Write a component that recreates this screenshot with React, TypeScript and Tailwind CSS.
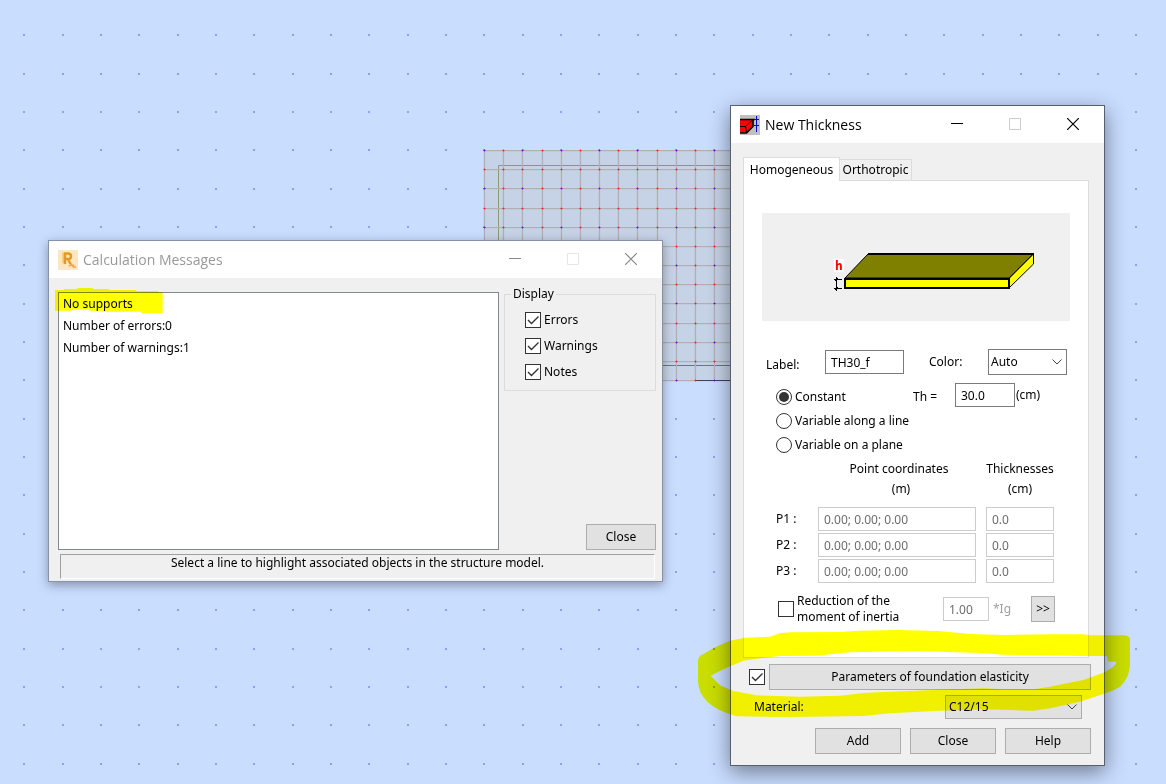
import { useId, useState } from 'react';
import type { ReactNode } from 'react';
import { clsx } from 'clsx';

const STEP = 115 / 3;
const MESH = { x: 484, y: 150, cols: 24, rows: 12 };

const points = ['P1', 'P2', 'P3'];
const thicknessTypes = ['Constant', 'Variable along a line', 'Variable on a plane'];

const buttonStyle = 'h-[26px] border border-[#adadad] bg-[#e1e1e1] text-center hover:bg-[#e5f1fb]';
const inputStyle =
  'h-6 min-w-0 border border-[#7a7a7a] bg-white px-[5px] text-black disabled:border-[#cccccc] disabled:text-[#6d6d6d]';

function ModelView() {
  const half = STEP / 2;
  const width = MESH.cols * half;
  const height = MESH.rows * half;

  return (
    <svg className="absolute inset-0 h-full w-full" aria-hidden="true">
      {/* Background grid */}
      {Array.from({ length: 24 }).map((_, row) =>
        Array.from({ length: 54 }).map((_, col) => (
          <rect
            key={`${row}-${col}`}
            x={Math.round(23.2 + col * STEP)}
            y={Math.round(34.2 + row * STEP)}
            width="2"
            height="2"
            fill="#8088fb"
            opacity="0.75"
          />
        ))
      )}

      {/* Meshed slab */}
      <rect x={MESH.x} y={MESH.y} width={width} height={height} fill="#c6d2e6" />
      <path d="M498.5 365.5V165.5H930V365.5Z" fill="none" stroke="#93986c" />
      <path d="M498 365.5H930" stroke="#7f8010" />
      {Array.from({ length: MESH.cols + 1 }).map((_, i) => (
        <rect key={i} x={Math.round(MESH.x + i * half) - 0.2} y={MESH.y} width="1.3" height={height} fill="#b0b0b4" />
      ))}
      {Array.from({ length: MESH.rows + 1 }).map((_, i) => (
        <rect key={i} x={MESH.x} y={Math.round(MESH.y + i * half)} width={width} height="1.2" fill="#b0b0b4" />
      ))}
      <path d="M695 380.5H930" stroke="#3d4560" />
      {Array.from({ length: MESH.rows + 1 }).map((_, row) =>
        Array.from({ length: MESH.cols + 1 }).map((_, col) => {
          const x = Math.round(MESH.x + col * half);
          const y = Math.round(MESH.y + row * half);
          const color = row % 2 === 0 && col % 2 === 0 ? '#8000e0' : '#ff1a1a';
          return (
            <g key={`${row}-${col}`} fill={color}>
              <rect x={x - 1} y={y} width="3" height="1" opacity="0.5" />
              <rect x={x} y={y - 1} width="1" height="3" opacity="0.4" />
              <rect x={x} y={y} width="1" height="1" />
            </g>
          );
        })
      )}
    </svg>
  );
}

function RobotIcon() {
  return (
    <svg width="20" height="20" viewBox="0 0 20 20" aria-hidden="true">
      <rect width="20" height="20" fill="#fde6c4" />
      <path d="M4 2l3 1.500v11l-3-2z" fill="#f8cd85" />
      <path
        d="M7 14V3.500h3.200q2.800 0 2.800 2.700T10.200 9H7M10 9l2.500 5"
        fill="none"
        stroke="#e39a22"
        strokeWidth="2.400"
      />
      <path d="M11 16.500l2.500-2.500 2 3.500M15.500 14.500v2.500h2.500" fill="none" stroke="#eba93b" strokeWidth="1.300" />
    </svg>
  );
}

function ThicknessIcon() {
  return (
    <svg width="20" height="20" viewBox="0 0 20 20" aria-hidden="true">
      <rect width="20" height="20" fill="#c0c0c0" />
      <path d="M0 5h13.500v4l-1.500 3-5 5.500H0z" fill="#ff0000" />
      <path d="M0 4.500h15M0 18h6.500l6.500-6.500V5" fill="none" stroke="#000000" strokeWidth="1.600" />
      <path d="M0 11.500h5.500L12.500 5M5.500 11.500l1 6" fill="none" stroke="#000000" />
      <path d="M16.500 1v16M14 4.500h5M14 10.500h5" fill="none" stroke="#0000e0" />
    </svg>
  );
}

function TitleBar({ icon, title, active }: { icon: ReactNode; title: string; active?: boolean }) {
  const stroke = active ? '#000000' : '#8a8a8a';
  const control = 'flex w-[58px] items-center justify-center pb-px';

  return (
    <div className="flex h-[37px] items-stretch bg-white pr-0.5">
      <div
        className={clsx(
          "flex flex-1 items-center gap-[5px] pl-[9px] font-['Open_Sans',sans-serif] text-[14px] whitespace-nowrap",
          active ? 'text-black' : 'text-[#999999]'
        )}
      >
        {icon}
        <h2>{title}</h2>
      </div>
      <button type="button" aria-label="Minimize" className={control}>
        <svg width="12" height="12" viewBox="0 0 12 12">
          <path d="M0 5.500h12" stroke={stroke} />
        </svg>
      </button>
      <button type="button" aria-label="Maximize" disabled className={control}>
        <svg width="12" height="12" viewBox="0 0 12 12">
          <path d="M.5.500h11v11H.5z" fill="none" stroke={active ? '#cccccc' : '#e6e6e6'} />
        </svg>
      </button>
      <button type="button" aria-label="Close window" className={control}>
        <svg width="12" height="12" viewBox="0 0 12 12">
          <path d="M0 0l12 12M12 0L0 12" stroke={stroke} strokeWidth="1.200" />
        </svg>
      </button>
    </div>
  );
}

interface CheckboxProps {
  label?: ReactNode;
  ariaLabel?: string;
  defaultChecked?: boolean;
}

function Checkbox({ label, ariaLabel, defaultChecked }: CheckboxProps) {
  const id = useId();

  return (
    <div className="flex items-center gap-[3px]">
      <span className="relative h-4 w-4 shrink-0">
        <input
          id={id}
          type="checkbox"
          aria-label={ariaLabel}
          defaultChecked={defaultChecked}
          className="peer block h-4 w-4 appearance-none border border-[#333333] bg-white"
        />
        <svg
          viewBox="0 0 16 16"
          className="pointer-events-none absolute inset-0 hidden h-4 w-4 peer-checked:block"
        >
          <path d="M3 8l3.500 3.500L13.500 4.500" fill="none" stroke="#333333" strokeWidth="1.400" />
        </svg>
      </span>
      {label && (
        <label htmlFor={id} className="leading-4">
          {label}
        </label>
      )}
    </div>
  );
}

function SelectBox({ id, value, className }: { id: string; value: string; className: string }) {
  return (
    <div className="relative">
      <select id={id} defaultValue={value} className={clsx('block appearance-none border', className)}>
        <option>{value}</option>
      </select>
      <svg
        width="10"
        height="6"
        viewBox="0 0 10 6"
        className="pointer-events-none absolute top-1/2 right-[5px] -translate-y-1/2"
      >
        <path d="M.5.500L5 5 9.500.500" fill="none" stroke="#444444" />
      </svg>
    </div>
  );
}

function SlabDrawing() {
  return (
    <div className="flex h-[108px] justify-center bg-[#f0f0f0]">
      <svg width="308" height="108" viewBox="0 0 308 108" role="img" aria-label="Slab of thickness h">
        <path d="M83 65L106 41h165L247 65z" fill="#808000" stroke="#000000" />
        <path d="M247 65.500L271.500 41v10L247 75z" fill="#ffff00" stroke="#000000" />
        <path d="M106 41h166" stroke="#000000" strokeWidth="2" />
        <rect x="83" y="66" width="164" height="9" fill="#ffff00" stroke="#000000" strokeWidth="2" />
        <rect x="72" y="46" width="10" height="13" fill="#ffffff" />
        <text x="73" y="57" fill="#ff0000" fontSize="12" fontWeight="700" fontFamily="DejaVu Sans Condensed, sans-serif">
          h
        </text>
        <path d="M74.500 64v14M72 66.500h8M72 75.500h8M73 68l3-3M73 77l3-3" fill="none" stroke="#000000" />
      </svg>
    </div>
  );
}

function CalculationMessages() {
  return (
    <section className="absolute top-[240px] left-[48px] w-[615px] border border-[#8592a8] bg-[#f0f0f0] shadow-[0_3px_10px_rgba(0,0,0,0.35)]">
      <TitleBar icon={<RobotIcon />} title="Calculation Messages" />
      <div className="flex gap-[5px] pt-2 pr-1.5 pl-[9px]">
        <ul className="mt-1.5 h-[258px] flex-1 border border-[#828790] bg-white px-1 leading-[22px]">
          <li>No supports</li>
          <li>Number of errors:0</li>
          <li>Number of warnings:1</li>
        </ul>
        <div className="flex w-[152px] flex-col justify-between">
          <fieldset className="border border-[#dcdcdc] px-1.5 py-[5px]">
            <legend className="px-0.5 leading-4">Display</legend>
            <div className="flex flex-col gap-2.5 py-[5px] pl-3.5">
              <Checkbox label="Errors" defaultChecked />
              <Checkbox label="Warnings" defaultChecked />
              <Checkbox label="Notes" defaultChecked />
            </div>
          </fieldset>
          <button type="button" className={clsx(buttonStyle, 'w-[70px] self-end')}>
            Close
          </button>
        </div>
      </div>
      <p className="mx-[7px] mt-1 mb-0.5 ml-[11px] h-[25px] border border-t-[#a0a0a0] border-r-white border-b-white border-l-[#a0a0a0] text-center leading-4">
        Select a line to highlight associated objects in the structure model.
      </p>
    </section>
  );
}

function NewThickness() {
  const [type, setType] = useState('Constant');

  return (
    <section className="absolute top-[105px] left-[730px] w-[375px] border border-[#56606f] bg-[#f0f0f0] shadow-[0_6px_20px_rgba(0,0,0,0.45)]">
      <TitleBar icon={<ThicknessIcon />} title="New Thickness" active />

      <div className="px-3 pt-3.5">
        {/* Tabs */}
        <div role="tablist" className="flex items-end">
          <button
            type="button"
            role="tab"
            aria-selected="true"
            className="relative -mb-px h-6 w-[97px] border border-b-0 border-[#dcdcdc] bg-white"
          >
            Homogeneous
          </button>
          <button
            type="button"
            role="tab"
            aria-selected="false"
            className="h-[21px] w-[72px] border border-b-0 border-l-0 border-[#dcdcdc]"
          >
            Orthotropic
          </button>
        </div>

        <div role="tabpanel" className="mr-[3px] border border-[#dcdcdc] bg-white px-[18px] pt-8 pb-8">
          <SlabDrawing />

          <div className="mt-7 flex items-center pl-1">
            <label htmlFor="label" className="w-[59px] pt-1.5">
              Label:
            </label>
            <input id="label" defaultValue="TH30_f" className={clsx(inputStyle, 'w-[79px]')} />
            <label htmlFor="color" className="ml-[25px] w-[59px]">
              Color:
            </label>
            <SelectBox id="color" value="Auto" className="h-[26px] w-[79px] border-[#7a7a7a] bg-white pl-0.5" />
          </div>

          <div className="mt-2 flex pl-3.5">
            <div className="flex w-[137px] flex-col pt-0.5 whitespace-nowrap">
              {thicknessTypes.map((name) => (
                <label key={name} className="flex h-6 items-center gap-[3px]">
                  <input
                    type="radio"
                    name="thickness-type"
                    checked={type === name}
                    onChange={() => setType(name)}
                    className="h-4 w-4 shrink-0 appearance-none rounded-full border border-[#333333] bg-white bg-clip-content p-0.5 checked:bg-[#333333]"
                  />
                  {name}
                </label>
              ))}
            </div>
            <div className="flex h-6 items-center">
              <label htmlFor="th" className="w-[42px] pt-1">
                Th =
              </label>
              <input id="th" defaultValue="30.0" className={clsx(inputStyle, 'w-[60px]')} />
              <span className="ml-px">(cm)</span>
            </div>
          </div>

          <table className="mt-0.5 ml-3.5">
            <thead>
              <tr className="h-5">
                <th className="w-[42px]" />
                <th className="w-[168px] pr-1.5 font-normal">Point coordinates</th>
                <th className="w-[68px] font-normal whitespace-nowrap">Thicknesses</th>
              </tr>
              <tr className="h-[27px] align-top leading-5">
                <th />
                <th className="pr-0.5 font-normal">(m)</th>
                <th className="font-normal">(cm)</th>
              </tr>
            </thead>
            <tbody>
              {points.map((point) => (
                <tr key={point} className="h-[26px]">
                  <th className="text-left font-normal">{point} :</th>
                  <td>
                    <input
                      aria-label={`${point} coordinates`}
                      defaultValue="0.00; 0.00; 0.00"
                      disabled
                      className={clsx(inputStyle, 'block w-[158px]')}
                    />
                  </td>
                  <td>
                    <input
                      aria-label={`${point} thickness`}
                      defaultValue="0.0"
                      disabled
                      className={clsx(inputStyle, 'block w-[68px]')}
                    />
                  </td>
                </tr>
              ))}
            </tbody>
          </table>

          <div className="mt-[9px] flex items-center pr-[15px] pl-4">
            <div className="flex-1">
              <Checkbox
                label={
                  <>
                    Reduction of the
                    <br />
                    moment of inertia
                  </>
                }
              />
            </div>
            <input
              id="inertia"
              defaultValue="1.00"
              disabled
              className={clsx(inputStyle, 'w-[46px]')}
            />
            <label htmlFor="inertia" className="ml-1 w-[38px] text-[#a0a0a0]">
              *Ig
            </label>
            <button type="button" className={clsx(buttonStyle, 'w-6')}>
              &gt;&gt;
            </button>
          </div>
        </div>
      </div>

      <div className="flex items-center gap-1 pt-1.5 pr-[13px] pl-[18px]">
        <Checkbox ariaLabel="Use foundation elasticity" defaultChecked />
        <button type="button" className={clsx(buttonStyle, 'flex-1')}>
          Parameters of foundation elasticity
        </button>
      </div>

      <div className="mt-[5px] flex items-center justify-between pr-[22px] pl-[23px]">
        <label htmlFor="material">Material:</label>
        <SelectBox id="material" value="C12/15" className="h-6 w-[137px] border-[#adadad] bg-[#e1e1e1] pl-[3px]" />
      </div>

      <div className="mt-[9px] mb-[11px] flex justify-end gap-[9px] pr-[13px]">
        <button type="button" className={clsx(buttonStyle, 'w-[86px]')}>
          Add
        </button>
        <button type="button" className={clsx(buttonStyle, 'w-[86px]')}>
          Close
        </button>
        <button type="button" className={clsx(buttonStyle, 'w-[86px]')}>
          Help
        </button>
      </div>
    </section>
  );
}

function Highlights() {
  return (
    <>
      <svg
        width="110"
        height="28"
        viewBox="46 174 330 84"
        className="pointer-events-none absolute top-[288px] left-[55px] mix-blend-multiply"
        aria-hidden="true"
      >
        <path
          d="M46 180H72V177H113V174H160V177H208V180H290V183H355V186H369V249H305V245H185V242H150V239H96V242H46Z"
          fill="#ffff00"
        />
      </svg>
      <svg
        width="450"
        height="100"
        viewBox="0 0 450 100"
        className="pointer-events-none absolute top-[620px] left-[690px] mix-blend-multiply"
        aria-hidden="true"
      >
        <g transform="scale(0.333333)">
          <path
            fillRule="evenodd"
            fill="#ffff00"
            d="M30 108L75 82 120 62 165 53 240 50 270 40 300 37 450 36 510 32 620 30 745 33 840 42 940 45 1090 43 1180 43 1200 46H1300Q1320 46 1320 60V135Q1318 175 1290 200 1268 214 1240 222L1170 245 1080 265 1030 272 880 268 750 272 600 280 520 288 300 291 140 289Q80 272 52 245 26 220 24 185V125Q24 115 30 108Z
            M62 167L100 148 160 122 215 114 270 108 380 107 480 97 680 93 870 99 940 104 1060 106 1170 108H1250L1255 125H1278V132L1265 143 1240 158 1180 180 1130 190 1080 200 1030 208H940L880 205 730 210 600 215 520 219 450 227 330 230 200 226 130 213 90 196Z"
          />
        </g>
      </svg>
    </>
  );
}

export default function App() {
  return (
    <main className="relative isolate min-h-screen overflow-hidden bg-[#c9ddff] font-['Noto_Sans','DejaVu_Sans',sans-serif] text-[12px] leading-4 text-black">
      <ModelView />
      <CalculationMessages />
      <NewThickness />
      <Highlights />
    </main>
  );
}
